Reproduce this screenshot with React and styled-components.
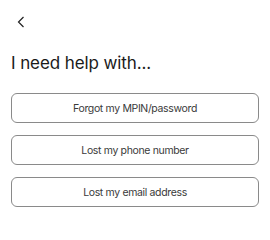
import * as React from "react";
import styled, { createGlobalStyle } from "styled-components";

const GlobalStyle = createGlobalStyle`
  body {
    margin: 0;
    background: #ffffff;
    font-family: "Inter", "Noto Sans", sans-serif;
  }
`;

const Page = styled.div`
  width: 270px;
  height: 240px;
  padding: 14px 11px 0;
  box-sizing: border-box;
  display: flex;
  flex-direction: column;
`;

const BackButton = styled.button`
  width: 14px;
  height: 14px;
  margin-left: 3px;
  margin-top: 1px;
  padding: 0;
  border: none;
  background: none;
  display: flex;
  align-items: center;
  justify-content: center;
  cursor: pointer;
`;

const Title = styled.h1`
  margin: 24px 0 20px;
  font-size: 17px;
  font-weight: 400;
  color: #1a1a1a;
  letter-spacing: -0.1px;
`;

const Options = styled.div`
  display: flex;
  flex-direction: column;
  gap: 12px;
`;

const OptionButton = styled.button`
  height: 30px;
  width: 100%;
  border: 1px solid #8a8a8a;
  border-radius: 6px;
  background: #fff;
  font-family: "Inter", "Noto Sans", sans-serif;
  font-size: 10.5px;
  letter-spacing: -0.35px;
  color: #3a3a3a;
  cursor: pointer;
`;

const options = [
  "Forgot my MPIN/password",
  "Lost my phone number",
  "Lost my email address",
];

const App = () => (
  <>
    <GlobalStyle />
    <Page>
      <BackButton aria-label="Back">
        <svg width="8" height="12" viewBox="0 0 8 12" fill="none">
          <path d="M6.5 1L1.5 6L6.5 11" stroke="#222" strokeWidth="1.2" />
        </svg>
      </BackButton>
      <Title>I need help with...</Title>
      <Options>
        {options.map((o) => (
          <OptionButton key={o}>{o}</OptionButton>
        ))}
      </Options>
    </Page>
  </>
);

export default App;
